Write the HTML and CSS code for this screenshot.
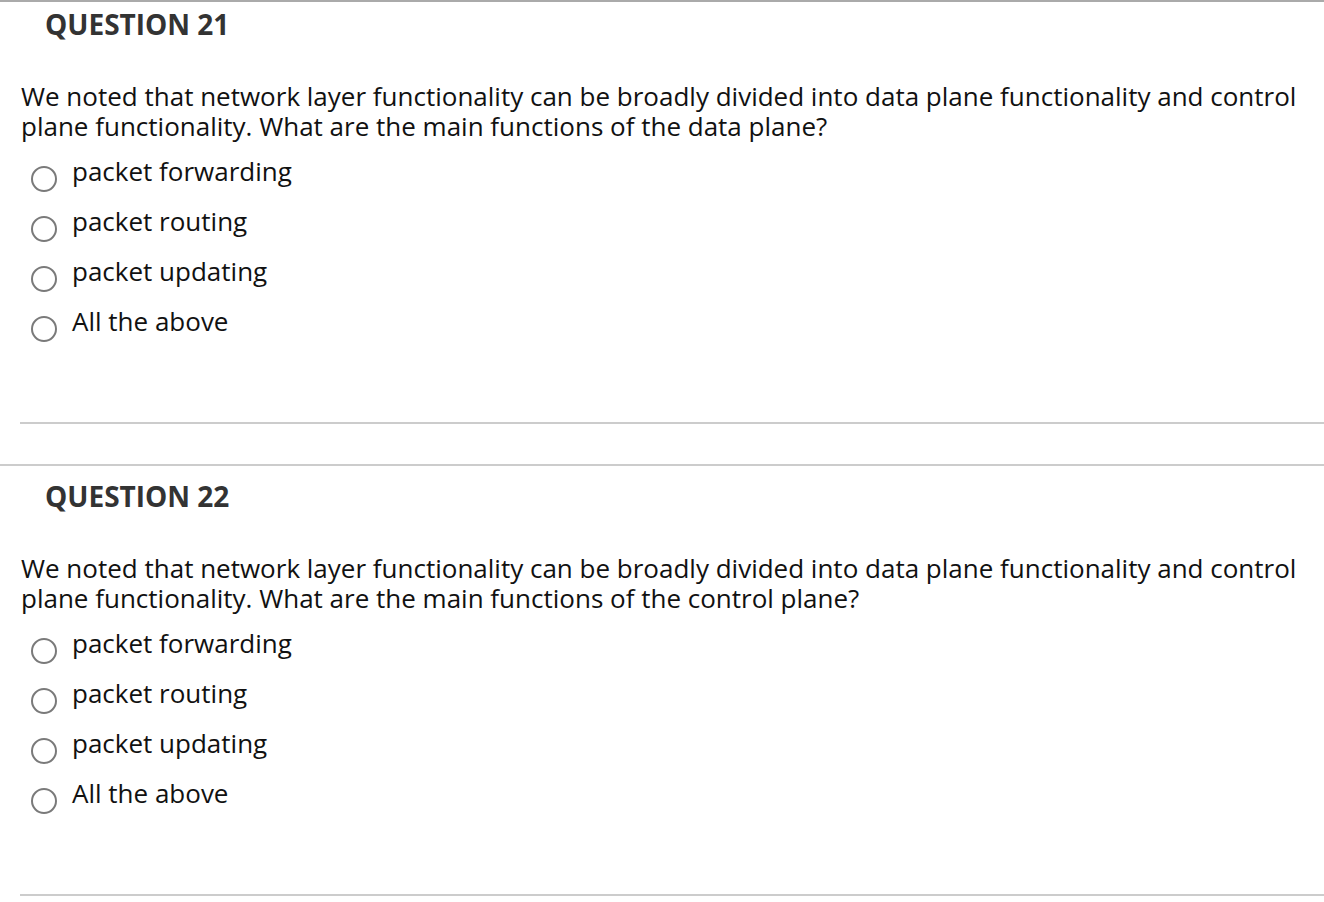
FILE: index.html
```html
<!DOCTYPE html>
<html>
<head>
<meta charset="utf-8">
<link rel="stylesheet" href="styles.css">
</head>
<body>
<div class="question first">
  <h2 class="q-title">QUESTION 21</h2>
  <p class="q-text">We noted that network layer functionality can be broadly divided into data plane functionality and control plane functionality. What are the main functions of the data plane?</p>
  <ul class="options">
    <li class="option"><span class="radio"></span><span class="label">packet forwarding</span></li>
    <li class="option"><span class="radio"></span><span class="label">packet routing</span></li>
    <li class="option"><span class="radio"></span><span class="label">packet updating</span></li>
    <li class="option"><span class="radio"></span><span class="label">All the above</span></li>
  </ul>
  <div class="sep"></div>
</div>
<div class="question">
  <h2 class="q-title">QUESTION 22</h2>
  <p class="q-text">We noted that network layer functionality can be broadly divided into data plane functionality and control plane functionality. What are the main functions of the control plane?</p>
  <ul class="options">
    <li class="option"><span class="radio"></span><span class="label">packet forwarding</span></li>
    <li class="option"><span class="radio"></span><span class="label">packet routing</span></li>
    <li class="option"><span class="radio"></span><span class="label">packet updating</span></li>
    <li class="option"><span class="radio"></span><span class="label">All the above</span></li>
  </ul>
  <div class="sep"></div>
</div>
</body>
</html>
```
FILE: styles.css
```css
html, body {
  margin: 0;
  padding: 0;
  background: #fff;
}
body {
  font-family: "Open Sans", "Liberation Sans", sans-serif;
  color: #111;
}
.question {
  border-top: 2px solid #ccc;
  padding-top: 12px;
  margin-top: 40px;
}
.question.first {
  border-top-color: #aaa;
  padding-top: 4px;
  margin-top: 0;
}
.q-title {
  margin: 0 0 0 45px;
  font-size: 28px;
  line-height: 36px;
  font-weight: 700;
  color: #333;
}
.q-text {
  margin: 39px 0 0 21px;
  font-size: 26px;
  line-height: 30px;
  padding-right: 20px;
}
.options {
  list-style: none;
  margin: 5px 0 0 0;
  padding: 0;
}
.option {
  display: flex;
  align-items: center;
  height: 50px;
  padding-left: 31px;
  font-size: 26px;
}
.radio {
  width: 26px;
  height: 26px;
  box-sizing: border-box;
  border: 2px solid #7a7a7a;
  border-radius: 50%;
  margin-right: 15px;
  margin-top: 15px;
  flex: none;
}
.label {
  line-height: 30px;
}
.sep {
  margin: 76px 0 0 20px;
  height: 2px;
  background: #ccc;
}
```
